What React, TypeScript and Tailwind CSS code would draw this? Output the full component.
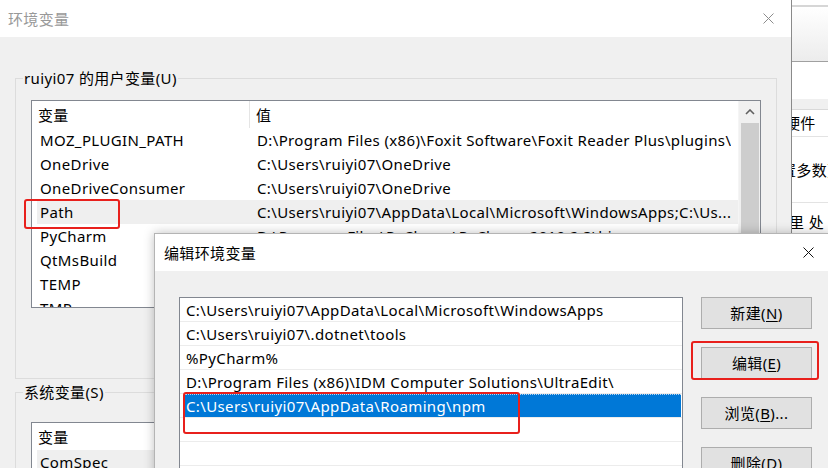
import React from 'react';

const userVars: [string, string][] = [
  ['MOZ_PLUGIN_PATH', 'D:\\Program Files (x86)\\Foxit Software\\Foxit Reader Plus\\plugins\\'],
  ['OneDrive', 'C:\\Users\\ruiyi07\\OneDrive'],
  ['OneDriveConsumer', 'C:\\Users\\ruiyi07\\OneDrive'],
  ['Path', 'C:\\Users\\ruiyi07\\AppData\\Local\\Microsoft\\WindowsApps;C:\\Us...'],
  ['PyCharm', 'D:\\Program Files\\PyCharm\\PyCharm 2019.2.3\\bin'],
  ['QtMsBuild', 'C:\\Users\\ruiyi07\\AppData\\Local\\QtMsBuild'],
  ['TEMP', 'C:\\Users\\ruiyi07\\AppData\\Local\\Temp'],
  ['TMP', 'C:\\Users\\ruiyi07\\AppData\\Local\\Temp'],
];

const pathItems = [
  'C:\\Users\\ruiyi07\\AppData\\Local\\Microsoft\\WindowsApps',
  'C:\\Users\\ruiyi07\\.dotnet\\tools',
  '%PyCharm%',
  'D:\\Program Files (x86)\\IDM Computer Solutions\\UltraEdit\\',
  'C:\\Users\\ruiyi07\\AppData\\Roaming\\npm',
  '',
  '',
];

// thin close cross used in both title bars
function CloseX({ color }: { color: string }) {
  return (
    <svg width="11" height="11" viewBox="0 0 11 11">
      <path d="M0.5 0.5 L10.5 10.5 M10.5 0.5 L0.5 10.5" stroke={color} strokeWidth="1" fill="none" />
    </svg>
  );
}

function ListHeader() {
  return (
    <div className="flex h-[27px] shrink-0 items-center text-black">
      <div className="w-[218px] h-full pl-[6px] flex items-center border-r border-[#e5e5e5]">变量</div>
      <div className="pl-[6px]">值</div>
    </div>
  );
}

function VarRow({ name, value, selected }: { name: string; value: string; selected?: boolean }) {
  return (
    <div className={`ml-[5px] flex h-[24px] shrink-0 items-center whitespace-nowrap ${selected ? 'bg-[#efefef]' : ''}`}>
      <div className="w-[220px] pl-[3px] shrink-0">{name}</div>
      <div className="overflow-hidden">{value}</div>
    </div>
  );
}

function Btn({ label, k, tail }: { label: string; k: string; tail?: string }) {
  return (
    <div className="w-[111px] h-[32px] bg-[#e1e1e1] border border-[#adadad] flex items-center justify-center text-black">
      {label}(<span className="underline underline-offset-2">{k}</span>){tail}
    </div>
  );
}

export default function App() {
  return (
    <div className="relative w-[828px] h-[468px] overflow-hidden bg-white text-[15px] leading-[20px] tracking-[0.37px] font-['Noto_Sans','Noto_Sans_CJK_SC',sans-serif]">
      {/* window behind, on the right */}
      <div className="absolute left-[791px] top-0 w-[37px] h-full bg-white flex flex-col text-black">
        <div className="h-[5px]" />
        <div className="h-[2px] bg-[#d6d6d6]" />
        <div className="h-[54px] bg-gradient-to-b from-white to-[#ececec]" />
        <div className="h-px bg-[#a0a0a0]" />
        <div className="h-[37px]" />
        <div className="h-[11px] bg-[#f0f0f0] border-b border-[#d9d9d9]" />
        <div className="h-[26px] flex items-center -ml-[6px] whitespace-nowrap">硬件</div>
        <div className="h-px bg-[#e3e3e3]" />
        <div className="h-[65px] flex items-center -ml-[10px] whitespace-nowrap">置多数更</div>
        <div className="h-px bg-[#e3e3e3]" />
        <div className="h-[29px] flex items-end -ml-[2px] whitespace-nowrap">里 处</div>
      </div>

      {/* environment variables window */}
      <div className="absolute left-0 top-0 w-[792px] h-full flex flex-col border-r border-[#8a8a8a]">
        <div className="h-[37px] bg-white flex items-center justify-between shrink-0">
          <div className="pl-[8px] text-[#999999]">环境变量</div>
          <div className="w-[44px] h-full mr-[1px] flex items-center justify-center">
            <CloseX color="#8c8c8c" />
          </div>
        </div>
        <div className="flex-1 bg-[#f0f0f0] pt-[31px]">
          <fieldset className="ml-[15px] w-[762px] h-[311px] border border-[#dcdcdc]">
            <legend className="ml-[7px] px-[1px] text-black">ruiyi07 的用户变量(U)</legend>
            <div className="ml-[15px] mt-[12px] w-[730px] h-[208px] border border-[#828790] bg-white flex overflow-hidden">
              <div className="flex-1 flex flex-col text-black overflow-hidden">
                <ListHeader />
                {userVars.map(([n, v]) => (
                  <VarRow key={n} name={n} value={v} selected={n === 'Path'} />
                ))}
              </div>
              <div className="w-[22px] bg-[#f0f0f0] flex flex-col items-center border-l border-[#f5f5f5]">
                <div className="h-[22px] w-full flex items-center justify-center">
                  <svg width="10" height="6" viewBox="0 0 10 6">
                    <path d="M1 5 L5 1 L9 5" stroke="#606060" strokeWidth="1.6" fill="none" />
                  </svg>
                </div>
                <div className="w-[18px] h-[160px] bg-[#cdcdcd]" />
              </div>
            </div>
          </fieldset>
          <fieldset className="mt-[3px] ml-[15px] w-[762px] h-[120px] border border-[#dcdcdc]">
            <legend className="ml-[7px] px-[1px] text-black">系统变量(S)</legend>
            <div className="ml-[15px] mt-[20px] w-[730px] h-[100px] border border-[#828790] bg-white flex flex-col text-black">
              <ListHeader />
              <VarRow name="ComSpec" value="C:\WINDOWS\system32\cmd.exe" selected />
            </div>
          </fieldset>
        </div>
      </div>

      {/* edit dialog */}
      <div className="absolute left-[154px] top-[233px] w-[678px] h-[250px] border border-[#b4b4b4] shadow-[0_0_10px_rgba(0,0,0,0.25)] flex flex-col">
        <div className="h-[37px] bg-white flex items-center justify-between shrink-0">
          <div className="pl-[9px] text-black">编辑环境变量</div>
          <div className="w-[46px] h-full flex items-center justify-center">
            <CloseX color="#111111" />
          </div>
        </div>
        <div className="flex-1 bg-[#f0f0f0] flex items-start pt-[26px] pl-[24px]">
          <div className="w-[504px] h-[200px] border border-[#828790] bg-white text-black">
            {pathItems.map((p, i) => (
              <div key={i} className="h-[24px] border-b border-[#ececec] flex">
                {i === 4 ? (
                  <div className="ml-[5px] mr-px flex-1 h-[23px] bg-[#0078d7] text-white pl-[1px] flex items-center border-t border-dotted border-[#b9d4ee] whitespace-nowrap">
                    {p}
                  </div>
                ) : (
                  <div className="ml-[6px] h-[23px] flex items-center whitespace-nowrap">{p}</div>
                )}
              </div>
            ))}
          </div>
          <div className="ml-[18px] flex flex-col gap-[18px]">
            <Btn label="新建" k="N" />
            <Btn label="编辑" k="E" />
            <Btn label="浏览" k="B" tail="..." />
            <Btn label="删除" k="D" />
          </div>
        </div>
      </div>

      {/* red annotation boxes */}
      <div className="absolute left-[24px] top-[199px] w-[96px] h-[30px] border-2 border-[#e8201c] rounded-[3px]" />
      <div className="absolute left-[183px] top-[392px] w-[337px] h-[42px] border-2 border-[#e8201c] rounded-[3px]" />
      <div className="absolute left-[691px] top-[341px] w-[128px] h-[39px] border-2 border-[#e8201c] rounded-[3px]" />
    </div>
  );
}
